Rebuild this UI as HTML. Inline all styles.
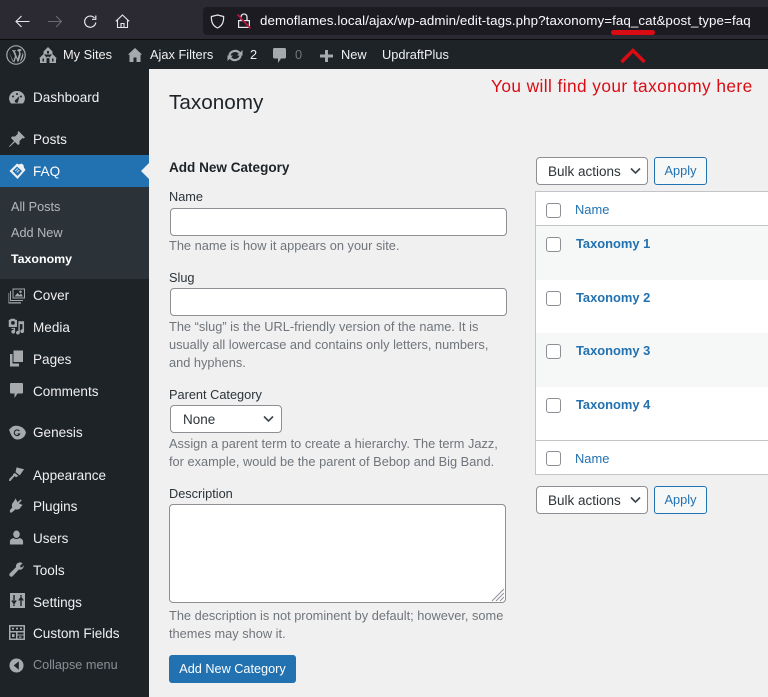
<!DOCTYPE html>
<html><head><meta charset="utf-8"><title>Taxonomy</title>
<style>
html,body{margin:0;padding:0}
body{width:768px;height:697px;position:relative;overflow:hidden;background:#f0f0f1;font-family:"Liberation Sans",sans-serif;font-size:13px;color:#3c434a;filter:blur(.35px)}
.a{position:absolute}
.t{position:absolute;white-space:nowrap;line-height:16px}
.m{color:#f0f0f1;font-size:13.55px;left:33px;margin-top:1px}
.b{color:#f0f0f1;font-size:12.8px;top:47px}
.h{color:#70757a;font-size:12.8px;left:169px}
.l{color:#2c3338;font-size:12.75px;left:169px}
.input{position:absolute;background:#fff;border:1px solid #8c8f94;border-radius:4px;box-sizing:border-box}
.cb{position:absolute;left:546px;width:15px;height:15px;background:#fff;border:1px solid #8c8f94;border-radius:3px;box-sizing:border-box}
.tx{position:absolute;left:576px;font-weight:bold;color:#2271b1;font-size:12.9px;white-space:nowrap;line-height:16px}
.nm{position:absolute;left:575px;color:#2271b1;font-size:12.9px;line-height:16px}
.sel{position:absolute;background:#fff;border:1px solid #8c8f94;border-radius:4px;box-sizing:border-box;color:#2c3338;font-size:13.5px;line-height:28px}
.ap{position:absolute;left:654px;width:53px;height:28px;background:#f6f7f7;border:1px solid #2271b1;border-radius:3px;box-sizing:border-box;color:#2271b1;font-size:12.8px;line-height:26px;text-align:center}
svg{position:absolute;display:block}
.ic{fill:#a7aaad}
</style></head><body>

<!-- browser bar -->
<div class="a" style="left:0;top:0;width:768px;height:39px;background:#2b2a33"></div>
<div class="a" style="left:203px;top:7px;width:565px;height:28px;background:#1c1b22;border-radius:4px 0 0 4px"></div>
<div class="a" style="left:0;top:39px;width:768px;height:1px;background:#0c0c0d"></div>
<svg style="left:15px;top:15px" width="15" height="13" viewBox="0 0 15 13" fill="none" stroke="#e6e6ea" stroke-width="1.100"><path d="M1 6.500H14.500M6.500 1L1 6.500L6.500 12"/></svg>
<svg style="left:48px;top:15px" width="15" height="13" viewBox="0 0 15 13" fill="none" stroke="#6a6973" stroke-width="1.100"><path d="M0 6.500H13.500M8 1L13.500 6.500L8 12"/></svg>
<svg style="left:83px;top:15px" width="15" height="14" viewBox="0 0 15 14" fill="none" stroke="#e6e6ea" stroke-width="1.200"><path d="M11.500 3A5.600 5.600 0 1 0 12.800 7.500"/><path d="M12.800 .5V4.300H9"/></svg>
<svg style="left:115px;top:14px" width="15" height="15" viewBox="0 0 15 15" fill="none" stroke="#e6e6ea" stroke-width="1.100"><path d="M.8 7.300L7.500 1L14.200 7.300M2.500 6V13.500H12.500V6M6 13.500V9.500H9V13.500"/></svg>
<svg style="left:210px;top:14px" width="15" height="15" viewBox="0 0 15 15" fill="none" stroke="#e6e6ea" stroke-width="1.200"><path d="M7.500 1L13.600 2.500C13.900 8 12 12 7.500 14C3 12 1.100 8 1.400 2.500Z"/></svg>
<svg style="left:237px;top:13px" width="14" height="16" viewBox="0 0 14 16" fill="none"><path d="M4 7V4A3 3 0 0 1 10 4V7" stroke="#e6e6ea" stroke-width="1.300"/><path d="M1 7H13V15H1Z" fill="#e6e6ea"/><path d="M2.200 8.200H11.800V13.800H2.200Z" fill="#1c1b22"/><path d="M.5 1.500L13.500 15.500" stroke="#b8143c" stroke-width="1.700"/></svg>
<div class="t" style="left:260px;top:13px;color:#fbfbfe;font-size:13.35px;letter-spacing:.085px">demoflames.local/ajax/wp-admin/edit-tags.php?taxonomy=faq_cat&amp;post_type=faq</div>
<div class="a" style="left:611px;top:30px;width:44px;height:5px;background:#d90c14;border-radius:3px"></div>

<!-- admin bar -->
<div class="a" style="left:0;top:40px;width:768px;height:29px;background:#1d2327"></div>
<svg style="left:6px;top:45px" width="20" height="20" viewBox="0 0 20 20"><circle cx="10" cy="10" r="9.200" fill="none" stroke="#a7aaad" stroke-width="1.200"/><path class="ic" d="M3 7.200L7 17.400L9 11L6.800 6H6V5.200H10V6H8.800L11.500 13.500L13 9C13.500 7.500 12.500 6.500 12 6H11.200V5.200C13 3.200 15.500 4 15.800 5.500C14 5.200 14 7 14.500 8C15 9.500 14.500 11 13.600 13.500L12 17.800L10 12.500L8.200 17.800ZM16.800 7C18 10 17 14.500 13.800 16.800L15.700 11.200C16.400 9.500 16.800 8.200 16.800 7Z"/></svg>
<svg style="left:39px;top:47px" width="18" height="16" viewBox="0 0 18 16"><path class="ic" d="M9 0L13.500 4.500V7.500H4.500V4.500ZM4.500 7L8.500 11.500H7.500V16H1V11.500H0ZM13.500 7L18 11.500H17V16H10.500V11.500H9.500ZM9 9L10.500 11H7.500Z"/><path fill="#1d2327" d="M8 4H10V6.500H8ZM3.500 11.500H5V14.500H3.500ZM13 11.500H14.500V14.500H13Z"/></svg>
<div class="t b" style="left:63px">My Sites</div>
<svg style="left:128px;top:48px" width="14" height="14" viewBox="0 0 14 14"><path class="ic" d="M7 0L14 6.500L12.500 6.800V14H8.500V9.500H5.500V14H1.500V6.800L0 6.500Z"/></svg>
<div class="t b" style="left:150px">Ajax Filters</div>
<svg style="left:227px;top:49px" width="16" height="13" viewBox="0 0 16 13" fill="none" stroke="#a7aaad" stroke-width="2.200"><path d="M2.500 6.500A5.500 4.800 0 0 1 12.500 4"/><path d="M13.500 6.500A5.500 4.800 0 0 1 3.500 9"/><path fill="#a7aaad" stroke="none" d="M15.500 1V6.500H10ZM.5 12V6.500H6Z"/></svg>
<div class="t b" style="left:250px">2</div>
<svg style="left:273px;top:48px" width="13" height="15" viewBox="0 0 13 15"><path class="ic" d="M1.500 0H11.500A1.500 1.500 0 0 1 13 1.500V9A1.500 1.500 0 0 1 11.500 10.500H8L5 15V10.500H1.500A1.500 1.500 0 0 1 0 9V1.500A1.500 1.500 0 0 1 1.500 0Z"/></svg>
<div class="t b" style="left:295px;color:#72777c">0</div>
<svg style="left:320px;top:50px" width="13" height="12" viewBox="0 0 13 12"><path class="ic" d="M5 0H8V4.500H13V7.500H8V12H5V7.500H0V4.500H5Z"/></svg>
<div class="t b" style="left:341px">New</div>
<div class="t b" style="left:382px">UpdraftPlus</div>

<!-- sidebar -->
<div class="a" style="left:0;top:69px;width:149px;height:628px;background:#1d2327"></div>
<div class="a" style="left:0;top:155px;width:149px;height:32px;background:#2271b1"></div>
<div class="a" style="left:0;top:187px;width:149px;height:92px;background:#2c3338"></div>
<svg style="left:141px;top:163px" width="8" height="16" viewBox="0 0 8 16"><path fill="#f0f0f1" d="M8 0V16L0 8Z"/></svg>

<svg style="left:9px;top:91px" width="16" height="14" viewBox="0 0 16 14"><path class="ic" fill-rule="evenodd" d="M8 0A7.500 7.500 0 0 1 14 12.500H2A7.500 7.500 0 0 1 8 0ZM8 2A1 1 0 1 0 8 4 1 1 0 1 0 8 2ZM4 4.500A1 1 0 1 0 4 6.500 1 1 0 1 0 4 4.500ZM12 4.500A1 1 0 1 0 12 6.500 1 1 0 1 0 12 4.500ZM10.500 5L7 8.500A1.700 1.700 0 1 0 9.200 10.200Z"/></svg>
<div class="t m" style="top:89px">Dashboard</div>
<svg style="left:8px;top:130px" width="18" height="18" viewBox="0 0 18 18"><path class="ic" d="M10.500 1L17 7.500L15.500 8.500L14.500 8L11.500 11L11.500 14L10 15L7 12L1.500 17L1 16.500L6 11L3 8L4 6.500L7 6.500L10 3.500L9.500 2.500Z"/></svg>
<div class="t m" style="top:131px">Posts</div>
<svg style="left:8px;top:162px" width="19" height="18" viewBox="0 0 18 18"><path fill="#f0f0f1" fill-rule="evenodd" d="M8.500 1.500L10.500 2.500L13 1.500L15 3L15.500 5.500L17 8L9 17L1 9ZM8.500 4.500L4 9L9 14L13.500 9Z"/><path fill="#f0f0f1" d="M6.500 8.700L9 6.300L9.600 6.900L7.100 9.300ZM8 10.200L10.500 7.800L11.100 8.400L8.600 10.800Z"/></svg>
<div class="t m" style="top:163px;color:#fff">FAQ</div>
<div class="t" style="left:11px;top:199px;color:#b4b9be;font-size:12.7px">All Posts</div>
<div class="t" style="left:11px;top:225px;color:#b4b9be;font-size:12.7px">Add New</div>
<div class="t" style="left:11px;top:251px;color:#fff;font-size:12.4px;font-weight:bold">Taxonomy</div>

<svg style="left:8px;top:288px" width="18" height="16" viewBox="0 0 18 16"><path class="ic" fill-rule="evenodd" d="M4.500 .5H17V10.500H4.500ZM5.500 1.500V9.500H16V1.500ZM6.500 8.500L9.500 5L11.500 7L13 5.500L15 8.500ZM12.500 2.500A1.200 1.200 0 1 0 12.500 5 1.200 1.200 0 1 0 12.500 2.500ZM3 3V12H15V13H2V3ZM.5 5H1.200V14.300H13V15.500H.5Z"/></svg>
<div class="t m" style="top:287px">Cover</div>
<svg style="left:8px;top:318px" width="17" height="17" viewBox="0 0 18 18"><path class="ic" fill-rule="evenodd" d="M3 .8H7L8 2H9.500V9.500H.8V2H2ZM5.200 3.200A2 2 0 1 0 5.200 7.200 2 2 0 1 0 5.200 3.200ZM11 3.500H17V14A2 2 0 1 1 15.300 12V6.500H12.500V15.500A2 2 0 1 1 11 13.600ZM3 10.500H7.500V14.500A2 2 0 1 1 6 12.600V11.500H4Z"/></svg>
<div class="t m" style="top:319px">Media</div>
<svg style="left:10px;top:350px" width="13" height="17" viewBox="0 0 13 17"><path class="ic" d="M3.500 .5H13V12H3.500ZM0 4H2.500V13.500H9V16.500H0Z"/></svg>
<div class="t m" style="top:351px">Pages</div>
<svg style="left:10px;top:383px" width="13" height="15" viewBox="0 0 13 15"><path class="ic" d="M1 0H12A1 1 0 0 1 13 1V9.500A1 1 0 0 1 12 10.500H7.500L4.500 15V10.500H1A1 1 0 0 1 0 9.500V1A1 1 0 0 1 1 0Z"/></svg>
<div class="t m" style="top:383px">Comments</div>

<svg style="left:8px;top:425px" width="19" height="15" viewBox="0 0 20 16"><path class="ic" d="M1 5C4 2 5 .8 9 .8C13 .8 18 3.500 19 8C18.500 12 15 15.500 10 15.500C5.500 15.500 3 11 1 5Z"/><path fill="none" stroke="#1d2327" stroke-width="1.200" d="M12 6.500A3 3 0 1 0 12.300 9.500H10"/></svg>
<div class="t m" style="top:424px">Genesis</div>
<svg style="left:8px;top:466px" width="17" height="16" viewBox="0 0 18 17"><path class="ic" d="M9 1.500L17 3.500L12.500 10L8 6.500ZM7.200 7.500L11 10.500L8.500 12L7 10.800L2.500 16H1L1.500 13.500L5.500 9.500L5.200 8.700Z"/></svg>
<div class="t m" style="top:467px">Appearance</div>
<svg style="left:9px;top:497px" width="16" height="16" viewBox="0 0 17 17"><path class="ic" d="M7 1.500L9 5.500L12.500 2.500L13.500 3.500L10.500 6.800L14.500 8.500L13 10L12 11.500A4 4 0 0 1 7 13L3 16.500H1V14L3.500 11A5 5 0 0 1 5 5Z"/></svg>
<div class="t m" style="top:498px">Plugins</div>
<svg style="left:9px;top:530px" width="15" height="15" viewBox="0 0 16 16"><path class="ic" d="M8 .5A3.500 4 0 1 1 8 8.500 3.500 4 0 1 1 8 .5ZM5 8.500C6.500 10 9.500 10 11 8.500C13.500 9 15 10.500 15 12V15.500H1V12C1 10.500 2.500 9 5 8.500Z"/></svg>
<div class="t m" style="top:530px">Users</div>
<svg style="left:9px;top:562px" width="15" height="15" viewBox="0 0 16 16"><path class="ic" d="M11 .5C12.500 .3 13.800 .8 14.500 1.500L11.800 4L12.300 5.800L14.200 5.500L15.600 3.500C16 6.500 13.500 9 10.500 8L4 15A2 2 0 0 1 1 12L7.500 5.500C7 3 8.500 1 11 .5Z"/></svg>
<div class="t m" style="top:562px">Tools</div>
<svg style="left:10px;top:593px" width="15" height="15" viewBox="0 0 15 15"><rect class="ic" width="15" height="15"/><g stroke="#1d2327" stroke-width="1.400" fill="none"><path d="M4 2V10M1.800 7.500L4 10.500L6.200 7.500M4 11.500V13M11 13V5M8.800 7.500L11 4.500L13.200 7.500M11 3.500V2"/></g></svg>
<div class="t m" style="top:594px">Settings</div>
<svg style="left:9px;top:625px" width="16" height="15" viewBox="0 0 16 15"><rect class="ic" width="16" height="15"/><path fill="#1d2327" d="M1.500 1.500H14.500V6H1.500ZM1.500 7.500H7V13.500H1.500ZM8.500 7.500H14.500V9.500H8.500ZM8.500 10.500H14.500V13.500H8.500Z"/><path class="ic" d="M3 2.800H5V4.500H3ZM7 2.800H9V4.500H7ZM11 2.800H13V4.500H11ZM3 9H5.500V12H3ZM10 11.500H12.500V12.800H10Z"/></svg>
<div class="t m" style="top:625px">Custom Fields</div>
<svg style="left:9px;top:658px" width="15" height="15" viewBox="0 0 16 16"><path class="ic" fill-rule="evenodd" d="M8 .5A7.500 7.500 0 1 1 8 15.500 7.500 7.500 0 1 1 8 .5ZM10.500 3.500L5 8L10.500 12.500Z"/></svg>
<div class="t m" style="top:656px;color:#8c8f94;font-size:12.7px">Collapse menu</div>

<!-- heading -->
<div class="t" style="left:169px;top:89px;font-size:20.7px;line-height:28px;color:#1d2327">Taxonomy</div>
<div class="t" style="left:491px;top:76px;font-size:17.3px;line-height:20px;color:#d90c14;letter-spacing:.42px">You will find your taxonomy here</div>
<svg style="left:619px;top:47px" width="28" height="18" viewBox="0 0 28 18" fill="none" stroke="#d90c14" stroke-width="3.500"><path d="M2.500 15L14 3.500L25.500 15"/></svg>

<!-- form -->
<div class="t" style="left:169px;top:160px;font-weight:bold;font-size:13.55px;color:#1d2327">Add New Category</div>
<div class="t l" style="top:189px">Name</div>
<div class="input" style="left:170px;top:208px;width:337px;height:28px"></div>
<div class="t h" style="top:238px">The name is how it appears on your site.</div>
<div class="t l" style="top:270px">Slug</div>
<div class="input" style="left:170px;top:288px;width:337px;height:28px"></div>
<div class="t h" style="top:319px">The “slug” is the URL-friendly version of the name. It is</div>
<div class="t h" style="top:337px">usually all lowercase and contains only letters, numbers,</div>
<div class="t h" style="top:355px">and hyphens.</div>
<div class="t l" style="top:387px">Parent Category</div>
<div class="sel" style="left:170px;top:405px;width:112px;height:28px;padding-left:12px">None</div>
<svg style="left:263px;top:415px" width="11" height="8" viewBox="0 0 11 8" fill="none" stroke="#3c434a" stroke-width="1.600"><path d="M1 1.500L5.500 6L10 1.500"/></svg>
<div class="t h" style="top:436px">Assign a parent term to create a hierarchy. The term Jazz,</div>
<div class="t h" style="top:454px">for example, would be the parent of Bebop and Big Band.</div>
<div class="t l" style="top:486px">Description</div>
<div class="input" style="left:169px;top:504px;width:337px;height:99px"></div>
<svg style="left:491px;top:588px" width="14" height="14" viewBox="0 0 14 14" fill="none" stroke="#8c8f94" stroke-width="1"><path d="M1 13L13 1M5 13L13 5M9 13L13 9"/></svg>
<div class="t h" style="top:608px">The description is not prominent by default; however, some</div>
<div class="t h" style="top:626px">themes may show it.</div>
<div class="a" style="left:169px;top:655px;width:127px;height:28px;background:#2271b1;border-radius:3px;color:#fff;font-size:12.7px;line-height:28px;text-align:center">Add New Category</div>

<!-- table -->
<div class="sel" style="left:536px;top:157px;width:112px;height:28px;padding-left:11px">Bulk actions</div>
<svg style="left:630px;top:167px" width="11" height="8" viewBox="0 0 11 8" fill="none" stroke="#3c434a" stroke-width="1.600"><path d="M1 1.500L5.500 6L10 1.500"/></svg>
<div class="ap" style="top:157px">Apply</div>

<div class="a" style="left:535px;top:191px;width:240px;height:284px;background:#fff;border:1px solid #c3c4c7;box-sizing:border-box"></div>
<div class="a" style="left:536px;top:225px;width:232px;height:1px;background:#c3c4c7"></div>
<div class="a" style="left:536px;top:226px;width:232px;height:54px;background:#f6f7f7"></div>
<div class="a" style="left:536px;top:333px;width:232px;height:54px;background:#f6f7f7"></div>
<div class="a" style="left:536px;top:440px;width:232px;height:1px;background:#c3c4c7"></div>

<div class="cb" style="top:203px"></div><div class="nm" style="top:202px">Name</div>
<div class="cb" style="top:237px"></div><div class="tx" style="top:236px">Taxonomy 1</div>
<div class="cb" style="top:291px"></div><div class="tx" style="top:290px">Taxonomy 2</div>
<div class="cb" style="top:344px"></div><div class="tx" style="top:343px">Taxonomy 3</div>
<div class="cb" style="top:398px"></div><div class="tx" style="top:397px">Taxonomy 4</div>
<div class="cb" style="top:451px"></div><div class="nm" style="top:451px">Name</div>

<div class="sel" style="left:536px;top:486px;width:112px;height:28px;padding-left:11px">Bulk actions</div>
<svg style="left:630px;top:496px" width="11" height="8" viewBox="0 0 11 8" fill="none" stroke="#3c434a" stroke-width="1.600"><path d="M1 1.500L5.500 6L10 1.500"/></svg>
<div class="ap" style="top:486px">Apply</div>

</body></html>
